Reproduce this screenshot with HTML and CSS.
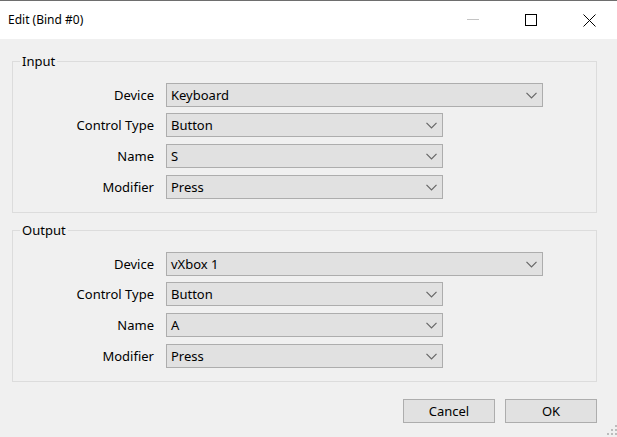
FILE: index.html
```html
<!DOCTYPE html>
<html lang="en">
<head>
<meta charset="utf-8">
<title>Edit (Bind #0)</title>
<link rel="stylesheet" href="styles.css">
</head>
<body>
<div class="window">
  <header class="titlebar">
    <span class="title">Edit (Bind #0)</span>
    <div class="caption">
      <span class="cap-btn">
        <svg width="12" height="12" viewBox="0 0 12 12"><line x1="0" y1="5.5" x2="12" y2="5.5" stroke="#c4c4c4" stroke-width="1"/></svg>
      </span>
      <span class="cap-btn">
        <svg width="12" height="12" viewBox="0 0 12 12"><rect x="0.5" y="0.5" width="11" height="11" fill="none" stroke="#000" stroke-width="1"/></svg>
      </span>
      <span class="cap-btn">
        <svg width="13" height="13" viewBox="0 0 13 13"><path d="M0.5 0.5 L12.5 12.5 M12.5 0.5 L0.5 12.5" stroke="#000" stroke-width="1" fill="none"/></svg>
      </span>
    </div>
  </header>

  <main class="content">
    <section class="group">
      <span class="group-title">Input</span>
      <div class="form">
        <label class="lbl">Device</label>
        <div class="combo wide"><span class="val">Keyboard</span><svg class="chev" width="11" height="7" viewBox="0 0 11 7"><polyline points="0.5,0.8 5.5,5.8 10.5,0.8" fill="none" stroke="#666" stroke-width="1.2"/></svg></div>
        <label class="lbl">Control Type</label>
        <div class="combo"><span class="val">Button</span><svg class="chev" width="11" height="7" viewBox="0 0 11 7"><polyline points="0.5,0.8 5.5,5.8 10.5,0.8" fill="none" stroke="#666" stroke-width="1.2"/></svg></div>
        <label class="lbl">Name</label>
        <div class="combo"><span class="val">S</span><svg class="chev" width="11" height="7" viewBox="0 0 11 7"><polyline points="0.5,0.8 5.5,5.8 10.5,0.8" fill="none" stroke="#666" stroke-width="1.2"/></svg></div>
        <label class="lbl">Modifier</label>
        <div class="combo"><span class="val">Press</span><svg class="chev" width="11" height="7" viewBox="0 0 11 7"><polyline points="0.5,0.8 5.5,5.8 10.5,0.8" fill="none" stroke="#666" stroke-width="1.2"/></svg></div>
      </div>
    </section>

    <section class="group">
      <span class="group-title">Output</span>
      <div class="form">
        <label class="lbl">Device</label>
        <div class="combo wide"><span class="val">vXbox 1</span><svg class="chev" width="11" height="7" viewBox="0 0 11 7"><polyline points="0.5,0.8 5.5,5.8 10.5,0.8" fill="none" stroke="#666" stroke-width="1.2"/></svg></div>
        <label class="lbl">Control Type</label>
        <div class="combo"><span class="val">Button</span><svg class="chev" width="11" height="7" viewBox="0 0 11 7"><polyline points="0.5,0.8 5.5,5.8 10.5,0.8" fill="none" stroke="#666" stroke-width="1.2"/></svg></div>
        <label class="lbl">Name</label>
        <div class="combo"><span class="val">A</span><svg class="chev" width="11" height="7" viewBox="0 0 11 7"><polyline points="0.5,0.8 5.5,5.8 10.5,0.8" fill="none" stroke="#666" stroke-width="1.2"/></svg></div>
        <label class="lbl">Modifier</label>
        <div class="combo"><span class="val">Press</span><svg class="chev" width="11" height="7" viewBox="0 0 11 7"><polyline points="0.5,0.8 5.5,5.8 10.5,0.8" fill="none" stroke="#666" stroke-width="1.2"/></svg></div>
      </div>
    </section>

    <div class="buttons">
      <button class="btn">Cancel</button>
      <button class="btn">OK</button>
    </div>
  </main>

  <svg class="grip" width="12" height="12" viewBox="0 0 12 12">
    <rect x="10" y="0" width="2" height="2" fill="#bcbcbc"/>
    <rect x="6" y="4" width="2" height="2" fill="#bcbcbc"/>
    <rect x="10" y="4" width="2" height="2" fill="#bcbcbc"/>
    <rect x="2" y="8" width="2" height="2" fill="#bcbcbc"/>
    <rect x="6" y="8" width="2" height="2" fill="#bcbcbc"/>
    <rect x="10" y="8" width="2" height="2" fill="#bcbcbc"/>
  </svg>
</div>
</body>
</html>
```

FILE: styles.css
```css
* { box-sizing: border-box; }

html, body {
  margin: 0;
  padding: 0;
  background: #f0f0f0;
}

body {
  font-family: "Noto Sans", "Liberation Sans", sans-serif;
  font-size: 13px;
  color: #000;
}

.window {
  position: relative;
  width: 617px;
  height: 437px;
  overflow: hidden;
  border-top: 1px solid #6e6e6e;
  background: #f0f0f0;
}

.titlebar {
  height: 38px;
  background: #fff;
  display: flex;
  align-items: center;
  justify-content: space-between;
  padding-left: 8px;
}

.title {
  font-size: 12px;
  line-height: 16px;
  color: #000;
}

.caption {
  display: flex;
  height: 100%;
  margin-right: -1px;
}

.cap-btn {
  width: 58px;
  height: 100%;
  display: flex;
  align-items: center;
  justify-content: center;
}

.cap-btn svg { display: block; }

.content {
  padding: 22px 20px 0 12px;
  display: flex;
  flex-direction: column;
}

.group {
  position: relative;
  height: 152px;
  border: 1px solid #dcdcdc;
  padding-top: 21px;
}

.group + .group {
  margin-top: 17px;
}

.group-title {
  position: absolute;
  top: -9px;
  left: 7px;
  padding: 0 2px;
  line-height: 16px;
  font-size: 13px;
  background: #f0f0f0;
}

.form {
  display: grid;
  grid-template-columns: 141px auto;
  grid-template-rows: 30px 31px 31px 24px;
  column-gap: 12px;
  justify-content: start;
  align-items: start;
}

.lbl {
  text-align: right;
  line-height: 24px;
}

.combo {
  width: 277px;
  height: 24px;
  border: 1px solid #adadad;
  background: #e1e1e1;
  display: flex;
  align-items: center;
  justify-content: space-between;
  padding-left: 4px;
  padding-right: 5px;
}

.combo.wide { width: 377px; }

.val { line-height: 16px; }

.chev { display: block; margin-top: 1px; }

.buttons {
  margin-top: 17px;
  display: flex;
  justify-content: flex-end;
  gap: 10px;
}

.btn {
  width: 92px;
  height: 24px;
  border: 1px solid #adadad;
  background: #e1e1e1;
  font-family: inherit;
  font-size: 13px;
  color: #000;
  padding: 0;
  line-height: 16px;
}

.grip {
  position: absolute;
  right: 0;
  bottom: 0;
}
```
